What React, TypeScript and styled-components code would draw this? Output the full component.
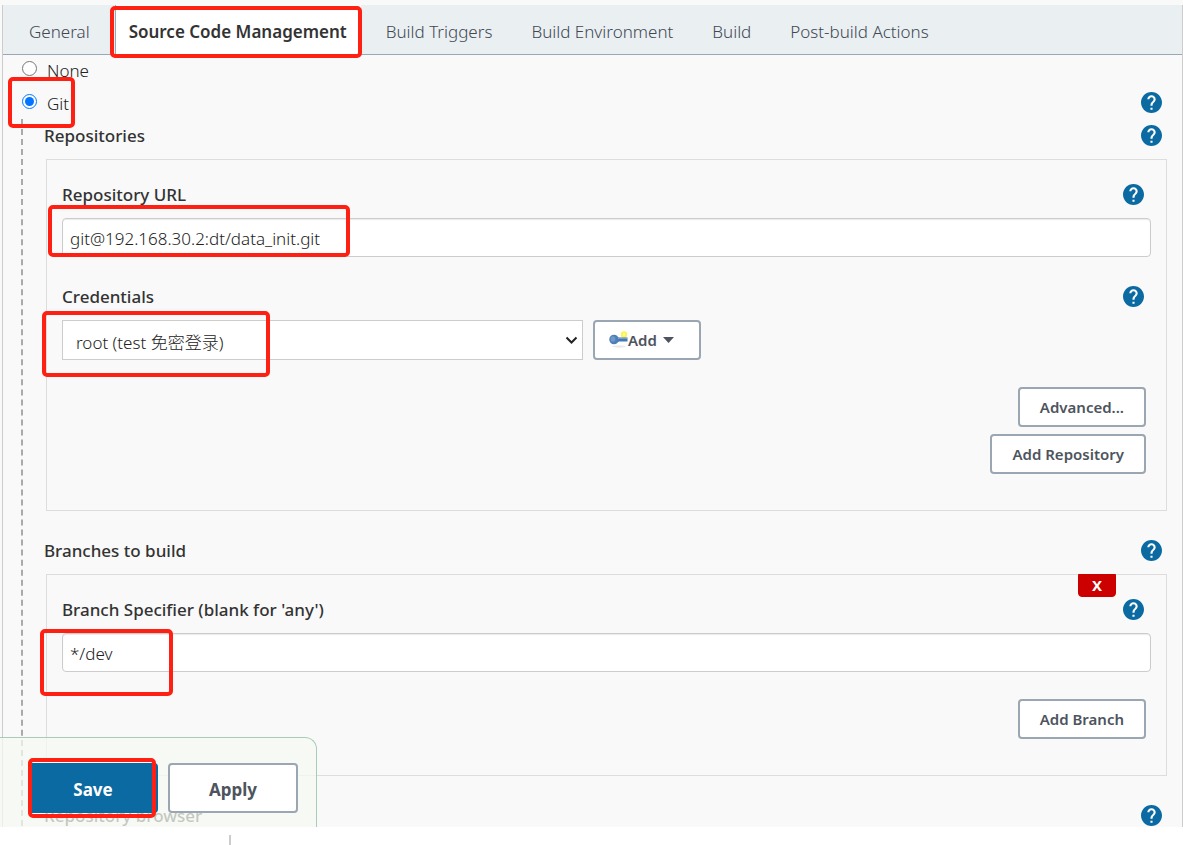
import React from "react";
import styled, { createGlobalStyle, css } from "styled-components";

const GlobalStyle = createGlobalStyle`
  *, *::before, *::after { box-sizing: border-box; }
  body {
    margin: 0;
    background: #fff;
    color: #222;
    font-family: "Noto Sans", "Open Sans", "Noto Sans CJK SC", sans-serif;
    font-size: 17px;
    font-weight: 300;
    line-height: 21px;
  }
  button, input, select { font: inherit; color: inherit; margin: 0; }
`;

const Page = styled.div`
  position: relative;
  overflow: hidden;
  padding: 5px 0 0 2px;
  background: #f9f9f9;
`;

const Panel = styled.form`
  border: solid #ccc;
  border-width: 0 1px;
  padding-bottom: 1px;
`;

const TabBar = styled.nav`
  display: flex;
  gap: 11px;
  height: 50px;
  padding-left: 12px;
  background: #eaeff2;
  border-bottom: 1px solid #9aa8b4;
`;

const Tab = styled.a<{ $active?: boolean }>`
  display: flex;
  align-items: center;
  padding: 3px 14px 0;
  color: #414852;
  text-decoration: none;
  white-space: nowrap;
  ${(p) =>
    p.$active &&
    css`
      background: #fff;
      color: #333;
      font-weight: 600;
      box-shadow: inset 1px 0 #9aa8b4;
    `}
`;

const Choices = styled.div`
  margin-top: -2px;
`;

const Row = styled.div<{ $last?: boolean }>`
  display: flex;
  align-items: center;
  justify-content: space-between;
  padding: ${(p) => (p.$last ? "6px 0 0" : "6px 0")};
`;

const ChoiceRow = styled(Row)`
  padding-left: 19px;
  padding-right: 20px;
`;

const Choice = styled.label`
  display: flex;
  align-items: flex-start;
  gap: 10px;
  padding-top: 2px;
  height: 21px;
  line-height: 20px;
`;

const Radio = styled.input`
  width: 15px;
  height: 15px;
`;

const Nested = styled.div`
  margin-left: 18px;
  padding: 0 15px 0 21px;
  border-left: 2px dashed #aaa;
`;

const Section = styled.section`
  & + & {
    margin-top: 23px;
  }
`;

const SectionRow = styled(Row)`
  padding-right: 5px;
`;

const labelText = css`
  padding-top: 1px;
  color: #333;
  font-weight: 500;
  line-height: 20px;
`;

const Heading = styled.span`
  ${labelText}
`;

const FieldLabel = styled.label`
  ${labelText}
`;

const Box = styled.div`
  position: relative;
  margin: 7px 0 0 2px;
  padding: 18px 15px 36px;
  border: 1px solid #ddd;
`;

const Field = styled.div`
  & + & {
    margin-top: 23px;
  }
`;

const FieldRow = styled(Row)`
  padding-right: 7px;
`;

const TextInput = styled.input`
  display: block;
  width: 100%;
  height: 39px;
  margin-top: 7px;
  padding: 2px 7px 0;
  border: 1px solid #ccc;
  border-radius: 4px;
  background: #fff;
  box-shadow: inset 0 1px 1px rgba(0, 0, 0, 0.08);
`;

const Controls = styled.div`
  display: flex;
  gap: 10px;
  margin-top: 7px;
`;

const SelectWrap = styled.div`
  position: relative;
  flex: 0 1 521px;
`;

const Select = styled.select`
  appearance: none;
  width: 100%;
  height: 40px;
  padding: 4px 30px 0 13px;
  border: 1px solid #ccc;
  border-radius: 0;
  background: #fff;
`;

const Chevron = styled.svg`
  position: absolute;
  right: 5px;
  top: 16px;
  pointer-events: none;
`;

const Button = styled.button`
  height: 40px;
  padding: 0 20px;
  border: 2px solid #9aa6b1;
  border-radius: 4px;
  background: #fff;
  color: #4d545d;
  font-size: 15px;
  font-weight: 600;
  white-space: nowrap;
`;

const AddButton = styled(Button)`
  display: flex;
  align-items: center;
  width: 108px;
  padding: 0 14px;
`;

const Caret = styled.svg`
  margin-left: 6px;
`;

const Actions = styled.div`
  display: flex;
  flex-direction: column;
  align-items: flex-end;
  gap: 7px;
  margin-top: 27px;
  padding-right: 5px;
`;

const DeleteButton = styled.button`
  position: absolute;
  top: -1px;
  right: 50px;
  width: 38px;
  height: 23px;
  padding: 0;
  border: 1px solid #c00;
  border-radius: 0 0 4px 4px;
  background: #c00;
  color: #fff;
  font-size: 15px;
  font-weight: 700;
`;

const HelpLink = styled.a`
  display: block;
  width: 21px;
  height: 21px;
  color: #0b6aa2;
  svg {
    display: block;
  }
`;

const SaveBar = styled.div`
  position: absolute;
  left: 0;
  bottom: 0;
  display: flex;
  gap: 10px;
  padding: 25px 18px 14px 28px;
  border: solid #a9ccba;
  border-width: 1px 1px 0 0;
  border-radius: 0 12px 0 0;
  background: rgba(246, 250, 241, 0.75);
`;

const BarButton = styled(Button)<{ $primary?: boolean }>`
  width: 130px;
  height: 50px;
  padding-top: 2px;
  font-size: 17px;
  font-weight: 700;
  ${(p) =>
    p.$primary &&
    css`
      border-color: #0b6aa2;
      background: #0b6aa2;
      color: #fff;
    `}
`;

const Mark = styled.div<{ $x: number; $y: number; $w: number; $h: number }>`
  position: absolute;
  left: ${(p) => p.$x}px;
  top: ${(p) => p.$y}px;
  width: ${(p) => p.$w}px;
  height: ${(p) => p.$h}px;
  border: 4px solid #ff2014;
  border-radius: 5px;
  pointer-events: none;
`;

const Tick = styled.div`
  width: 2px;
  height: 10px;
  margin: 8px 0 0 229px;
  background: #ccc;
`;

const Help = ({ topic }: { topic: string }) => (
  <HelpLink href="#help" aria-label={`Help for ${topic}`}>
    <svg width="21" height="21" viewBox="2 2 20 20" fill="currentColor">
      <circle cx="12" cy="12" r="9" fill="#fff" />
      <path d="M12 2C6.48 2 2 6.48 2 12s4.48 10 10 10 10-4.48 10-10S17.52 2 12 2zm1 17h-2v-2h2v2zm2.07-7.75l-.9.92C13.45 12.9 13 13.5 13 15h-2v-.5c0-1.1.45-2.1 1.17-2.83l1.24-1.26c.37-.36.59-.86.59-1.41 0-1.1-.9-2-2-2s-2 .9-2 2H8c0-2.21 1.79-4 4-4s4 1.79 4 4c0 .88-.36 1.68-.93 2.25z" />
    </svg>
  </HelpLink>
);

const KeyIcon = () => (
  <svg width="19" height="18" viewBox="0 0 19 18" aria-hidden="true">
    <ellipse cx="10" cy="15.5" rx="7" ry="1.2" fill="#e9e9e9" />
    <circle cx="15" cy="3.5" r="3.2" fill="#fbf64a" />
    <circle cx="15" cy="3.5" r="1.2" fill="#fffcb0" />
    <path d="M8 6.5h10.5v4h-8.5l-2 1z" fill="#4478b4" />
    <ellipse cx="5" cy="8.5" rx="4.7" ry="4.8" fill="#4c7fba" />
    <ellipse cx="4" cy="8" rx="2.4" ry="2.8" fill="#7199c7" />
    <path d="M9 7.4h9" stroke="#7da2cc" strokeWidth="1" />
  </svg>
);

const tabs = [
  "General",
  "Source Code Management",
  "Build Triggers",
  "Build Environment",
  "Build",
  "Post-build Actions",
];

const marks = [
  { x: 110, y: 6, w: 252, h: 52 },
  { x: 8, y: 77, w: 67, h: 51 },
  { x: 48, y: 205, w: 302, h: 52 },
  { x: 42, y: 311, w: 228, h: 66 },
  { x: 40, y: 629, w: 133, h: 67 },
  { x: 28, y: 758, w: 128, h: 60 },
];

export default function App() {
  return (
    <>
      <GlobalStyle />
      <Page>
        <Panel onSubmit={(e: React.FormEvent) => e.preventDefault()}>
          <TabBar>
            {tabs.map((name) => (
              <Tab key={name} href="#tab" $active={name === "Source Code Management"}>
                {name}
              </Tab>
            ))}
          </TabBar>
          <Choices>
            <ChoiceRow>
              <Choice>
                <Radio type="radio" name="scm" />
                None
              </Choice>
            </ChoiceRow>
            <ChoiceRow>
              <Choice>
                <Radio type="radio" name="scm" defaultChecked />
                Git
              </Choice>
              <Help topic="Git" />
            </ChoiceRow>
          </Choices>
          <Nested>
            <Section>
              <SectionRow>
                <Heading>Repositories</Heading>
                <Help topic="Repositories" />
              </SectionRow>
              <Box>
                <Field>
                  <FieldRow>
                    <FieldLabel htmlFor="url">Repository URL</FieldLabel>
                    <Help topic="Repository URL" />
                  </FieldRow>
                  <TextInput id="url" defaultValue="git@192.168.30.2:dt/data_init.git" />
                </Field>
                <Field>
                  <FieldRow>
                    <FieldLabel htmlFor="credentials">Credentials</FieldLabel>
                    <Help topic="Credentials" />
                  </FieldRow>
                  <Controls>
                    <SelectWrap>
                      <Select id="credentials">
                        <option>root (test 免密登录)</option>
                      </Select>
                      <Chevron width="13" height="9" viewBox="0 0 13 9" fill="none">
                        <path d="M1.5 1.5l5 5 5-5" stroke="#222" strokeWidth="2" />
                      </Chevron>
                    </SelectWrap>
                    <AddButton type="button">
                      <KeyIcon />
                      Add
                      <Caret width="11" height="6" viewBox="0 0 11 6">
                        <path d="M0 0h11L5.5 6z" fill="#4d545d" />
                      </Caret>
                    </AddButton>
                  </Controls>
                </Field>
                <Actions>
                  <Button type="button">Advanced...</Button>
                  <Button type="button">Add Repository</Button>
                </Actions>
              </Box>
            </Section>
            <Section>
              <SectionRow>
                <Heading>Branches to build</Heading>
                <Help topic="Branches to build" />
              </SectionRow>
              <Box>
                <DeleteButton type="button">X</DeleteButton>
                <Field>
                  <FieldRow>
                    <FieldLabel htmlFor="branch">Branch Specifier (blank for 'any')</FieldLabel>
                    <Help topic="Branch Specifier" />
                  </FieldRow>
                  <TextInput id="branch" defaultValue="*/dev" />
                </Field>
                <Actions>
                  <Button type="button">Add Branch</Button>
                </Actions>
              </Box>
            </Section>
            <Section>
              <SectionRow $last>
                <Heading>Repository browser</Heading>
                <Help topic="Repository browser" />
              </SectionRow>
            </Section>
          </Nested>
          <SaveBar>
            <BarButton type="submit" $primary>
              Save
            </BarButton>
            <BarButton type="button">Apply</BarButton>
          </SaveBar>
        </Panel>
        {marks.map((m) => (
          <Mark key={`${m.x}-${m.y}`} $x={m.x} $y={m.y} $w={m.w} $h={m.h} />
        ))}
      </Page>
      <Tick />
    </>
  );
}
